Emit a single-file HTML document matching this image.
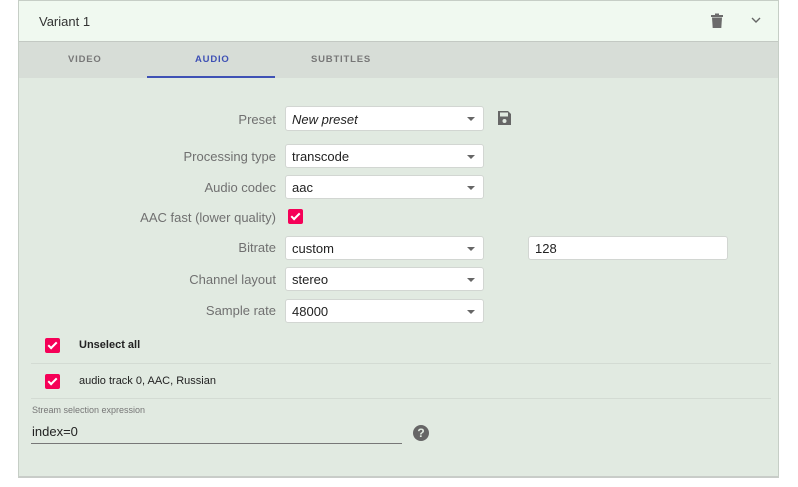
<!DOCTYPE html>
<html><head><style>
body{margin:0;width:798px;height:487px;background:#fff;font-family:"Liberation Sans",sans-serif;position:relative;overflow:hidden}
.card{position:absolute;left:18px;top:0;width:761px;height:478px;background:#e1eae1;border:1px solid #c6cec6;border-bottom:2px solid #c8ccc8;box-sizing:border-box}
.hdr{position:absolute;left:0;top:0;width:759px;height:40px;background:#f0f9f0;border-bottom:1px solid #c3c9c3}
.hdr .t{position:absolute;left:20px;top:13px;font-size:13px;color:#333}
.tabs{position:absolute;left:0;top:41px;width:759px;height:36px;background:#d7ddd7}
.tab{position:absolute;top:12px;font-size:9.5px;letter-spacing:.8px;color:#777;font-weight:bold}
.ab{position:absolute;left:128px;top:34px;width:128px;height:2px;background:#3f51b5}
.lbl{position:absolute;right:502px;font-size:13px;color:#707070;text-align:right;white-space:nowrap}
.sel{position:absolute;left:266px;width:199px;height:24px;background:#fff;border:1px solid #d2d6d2;border-radius:3px;box-sizing:border-box;font-size:13px;color:#222;padding:4px 0 0 6px}
.sel:after{content:"";position:absolute;right:8px;top:10px;border-left:4px solid transparent;border-right:4px solid transparent;border-top:4px solid #666}
.cb{position:absolute;width:15px;height:15px;background:#f50057;border-radius:2px}
.cb:after{content:"";position:absolute;left:5px;top:2px;width:3px;height:7px;border:solid #fff;border-width:0 2px 2px 0;transform:rotate(45deg)}
.hr{position:absolute;left:12px;width:740px;height:1px;background:#d3dbd3}
</style></head><body>
<div class="card">
<div class="hdr"><div class="t">Variant 1</div>
<svg style="position:absolute;left:691px;top:12px" width="14" height="16" viewBox="0 0 14 16"><rect x="1" y="2" width="12" height="2" fill="#6b6b6b"/><rect x="5" y="0.5" width="4" height="2" fill="#6b6b6b"/><path d="M2 4.5h10l-0.7 10.5h-8.6z" fill="#6b6b6b"/></svg>
<svg style="position:absolute;left:732px;top:16px" width="10" height="7" viewBox="0 0 10 7"><path d="M1 1l4 4 4-4" stroke="#666" stroke-width="1.4" fill="none"/></svg>
</div>
<div class="tabs">
<div class="tab" style="left:49px">VIDEO</div>
<div class="tab" style="left:176px;color:#3f51b5">AUDIO</div>
<div class="tab" style="left:292px">SUBTITLES</div>
<div class="ab"></div></div>
<div class="lbl" style="top:111px">Preset</div>
<div class="sel" style="top:105px;height:25px;font-style:italic;padding-top:5px">New preset</div>
<svg style="position:absolute;left:478px;top:109px" width="15" height="16" viewBox="0 0 15 16"><path d="M1 1h10l3 3v11h-13z" fill="#666"/><rect x="3" y="2.5" width="8" height="4" fill="#e1eae1"/><circle cx="7.5" cy="11" r="2" fill="#e1eae1"/></svg>
<div class="lbl" style="top:148px">Processing type</div><div class="sel" style="top:143px">transcode</div>
<div class="lbl" style="top:179px">Audio codec</div><div class="sel" style="top:174px">aac</div>
<div class="lbl" style="top:209px">AAC fast (lower quality)</div><div class="cb" style="left:269px;top:208px"></div>
<div class="lbl" style="top:239px">Bitrate</div><div class="sel" style="top:235px">custom</div>
<div class="sel nd" style="left:509px;top:235px;width:200px">128</div>
<style>.sel.nd:after{display:none}</style>
<div class="lbl" style="top:271px">Channel layout</div><div class="sel" style="top:266px">stereo</div>
<div class="lbl" style="top:302px">Sample rate</div><div class="sel" style="top:298px">48000</div>
<div class="cb" style="left:26px;top:337px"></div>
<div style="position:absolute;left:60px;top:338px;font-size:11px;color:#222;font-weight:bold">Unselect all</div>
<div class="hr" style="top:362px"></div>
<div class="cb" style="left:26px;top:373px"></div>
<div style="position:absolute;left:60px;top:374px;font-size:11px;color:#222">audio track 0, AAC, Russian</div>
<div class="hr" style="top:397px"></div>
<div style="position:absolute;left:13px;top:404px;font-size:9px;color:#777">Stream selection expression</div>
<div style="position:absolute;left:13px;top:423px;font-size:13px;color:#222">index=0</div>
<div style="position:absolute;left:12px;top:442px;width:371px;height:1px;background:#777"></div>
<div style="position:absolute;left:394px;top:424px;width:16px;height:16px;border-radius:50%;background:#666;color:#e1eae1;font-size:12px;font-weight:bold;text-align:center;line-height:16px">?</div>
</div>
</body></html>
